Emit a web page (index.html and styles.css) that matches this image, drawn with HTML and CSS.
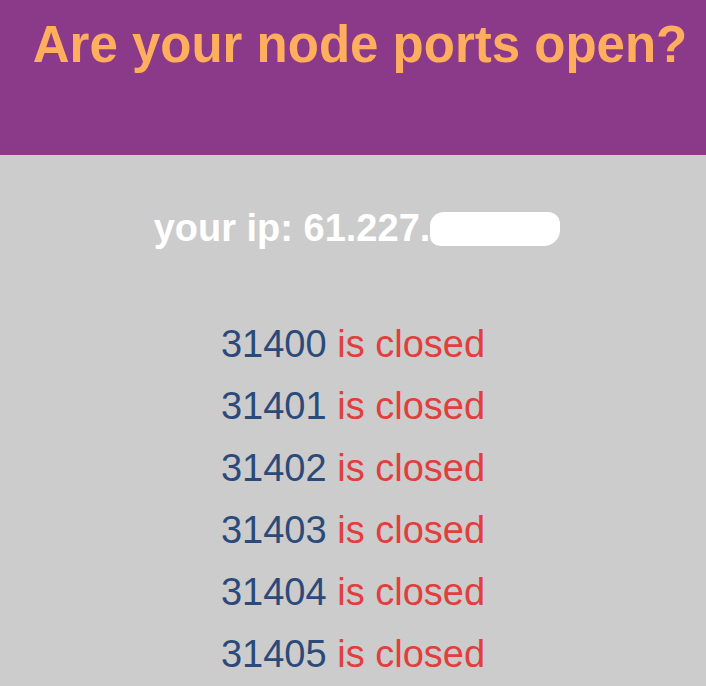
FILE: index.html
```html
<!DOCTYPE html>
<html lang="en">
<head>
    <meta charset="UTF-8">
    <meta name="viewport" content="width=device-width, initial-scale=1.0">
    <title>Node Port Check</title>
    <link rel="stylesheet" href="styles.css">
</head>
<body>
    <header class="top-bar">
        <h1>Are your node ports open?</h1>
    </header>
    <main class="results">
        <p class="your-ip">your ip: 61.227.<span class="ip-mask"></span></p>
        <ul class="port-list">
            <li><span class="port">31400</span> <span class="state">is closed</span></li>
            <li><span class="port">31401</span> <span class="state">is closed</span></li>
            <li><span class="port">31402</span> <span class="state">is closed</span></li>
            <li><span class="port">31403</span> <span class="state">is closed</span></li>
            <li><span class="port">31404</span> <span class="state">is closed</span></li>
            <li><span class="port">31405</span> <span class="state">is closed</span></li>
        </ul>
    </main>
</body>
</html>
```

FILE: styles.css
```css
:root {
    --np-purple: #8b3a8a;
    --np-orange: #ffae5e;
    --np-grey: #cccccc;
    --np-blue: #2b4a7a;
    --np-red: #e13e3d;
}

* {
    margin: 0;
    padding: 0;
    box-sizing: border-box;
    font-family: 'Liberation Sans', Arial, sans-serif;
}

body {
    background: var(--np-grey);
    min-height: 100vh;
}

.top-bar {
    background: var(--np-purple);
    height: 155px;
    padding-top: 16px;
    text-align: center;
}

.top-bar h1 {
    color: var(--np-orange);
    font-size: 51px;
    font-weight: 700;
    line-height: 58px;
    white-space: nowrap;
    padding-left: 14px;
}

.results {
    text-align: center;
    padding-top: 47px;
}

.your-ip {
    color: #ffffff;
    font-size: 38px;
    font-weight: 700;
    line-height: 52px;
    padding-left: 8px;
}

.ip-mask {
    display: inline-block;
    width: 130px;
    height: 34px;
    background: #ffffff;
    border-radius: 14px 12px 16px 10px;
    vertical-align: -5px;
}

.port-list {
    list-style: none;
    margin-top: 59px;
}

.port-list li {
    font-size: 38px;
    line-height: 62px;
}

.port {
    color: var(--np-blue);
}

.state {
    color: var(--np-red);
}
```
